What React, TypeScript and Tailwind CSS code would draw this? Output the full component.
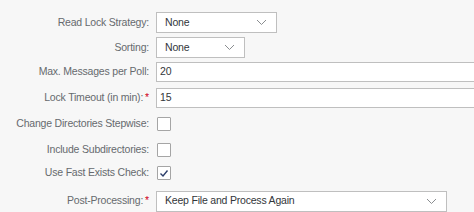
import React from 'react';

const labelCls = 'w-[150px] shrink-0 text-right pr-[1px] text-[#666a6e] whitespace-nowrap';

const Chevron: React.FC = () => (
  <svg width="11" height="7" viewBox="0 0 11 7" fill="none" className="shrink-0">
    <path d="M1 1l4.5 4.5L10 1" stroke="#8a8d90" strokeWidth="1" />
  </svg>
);

const Label: React.FC<{ text: string; required?: boolean }> = ({ text, required }) => (
  <div className={labelCls}>
    {text}
    {required && <span className="text-[#d0021b] ml-[2px]">*</span>}
  </div>
);

const Select: React.FC<{ value: string; width: string }> = ({ value, width }) => (
  <div className={`${width} h-[21px] bg-white border border-[#bfbfbf] flex items-center justify-between pl-[8px] pr-[9px] text-[#32363a]`}>
    <span>{value}</span>
    <Chevron />
  </div>
);

const Input: React.FC<{ value: string }> = ({ value }) => (
  <div className="w-[340px] h-[20px] bg-white border border-[#bfbfbf] flex items-center pl-[3px] text-[#32363a] shrink-0">
    {value}
  </div>
);

const Checkbox: React.FC<{ checked?: boolean }> = ({ checked }) => (
  <div className="w-[14px] h-[14px] bg-white border border-[#a5a5a5] rounded-[1px] flex items-center justify-center ml-[1px]">
    {checked && (
      <svg width="10" height="9" viewBox="0 0 10 9" fill="none">
        <path d="M1.5 4.5l2.5 2.5L8.5 1.5" stroke="#2c3e6b" strokeWidth="1.4" />
      </svg>
    )}
  </div>
);

export default function App() {
  return (
    <div
      className="w-[474px] h-[212px] bg-[#f7f7f7] overflow-hidden text-[10.5px] tracking-[-0.2px] pt-[12px]"
      style={{ fontFamily: '"Liberation Sans", Arial, sans-serif' }}
    >
      <div className="flex items-center gap-[6px] h-[21px]">
        <Label text="Read Lock Strategy:" />
        <Select value="None" width="w-[121px]" />
      </div>
      <div className="flex items-center gap-[6px] h-[21px] mt-[4px]">
        <Label text="Sorting:" />
        <Select value="None" width="w-[89px]" />
      </div>
      <div className="flex items-center gap-[6px] h-[20px] mt-[4px]">
        <Label text="Max. Messages per Poll:" />
        <Input value="20" />
      </div>
      <div className="flex items-center gap-[6px] h-[20px] mt-[6px]">
        <Label text="Lock Timeout (in min):" required />
        <Input value="15" />
      </div>
      <div className="flex items-center gap-[6px] h-[20px] mt-[6px]">
        <Label text="Change Directories Stepwise:" />
        <Checkbox />
      </div>
      <div className="flex items-center gap-[6px] h-[20px] mt-[6px]">
        <Label text="Include Subdirectories:" />
        <Checkbox />
      </div>
      <div className="flex items-center gap-[6px] h-[20px] mt-[3px]">
        <Label text="Use Fast Exists Check:" />
        <Checkbox checked />
      </div>
      <div className="flex items-center gap-[6px] h-[20px] mt-[8px]">
        <Label text="Post-Processing:" required />
        <Select value="Keep File and Process Again" width="w-[291px]" />
      </div>
    </div>
  );
}
